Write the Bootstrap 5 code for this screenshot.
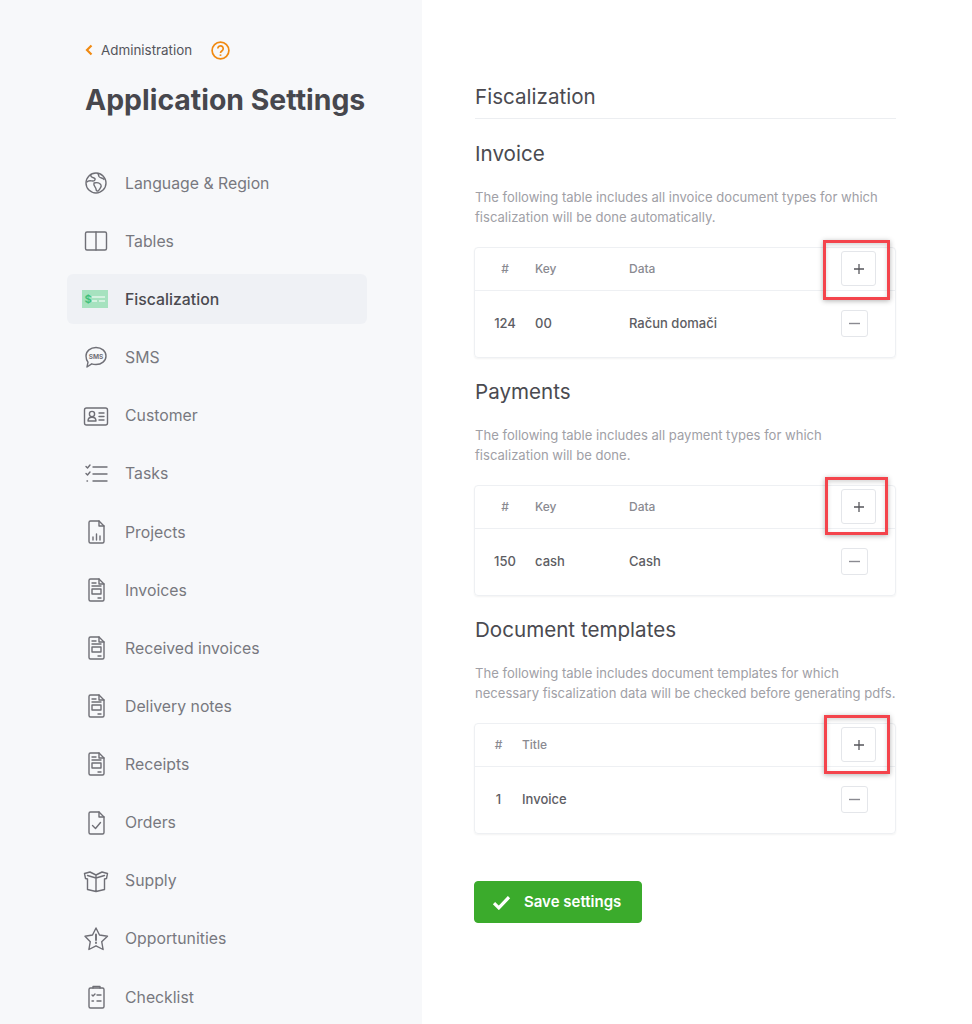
<!DOCTYPE html>
<html lang="en">
<head>
    <meta charset="UTF-8">
    <meta name="viewport" content="width=device-width, initial-scale=1.0">
    <title>Application Settings</title>
    <link href="https://cdn.jsdelivr.net/npm/bootstrap@5.3.0/dist/css/bootstrap.min.css" rel="stylesheet">
    <style>
        html, body { height: 1024px; overflow: hidden; }
        body { font-family: Inter, "Liberation Sans", sans-serif; color: #4a4a50; background: #fff; }
        .side-panel { width: 422px; height: 1024px; flex: none; background: #f7f8fa; padding: 40px 55px 0 67px; overflow: hidden; }
        .crumb-row { height: 20px; padding-left: 18px; font-size: 13.4px; color: #55555b; margin-bottom: 20px; }
        .crumb-back { width: 8px; height: 12px; margin-right: 8px; }
        .crumb-help { width: 19px; height: 19px; margin-left: 19px; }
        .page-title { font-size: 28.4px; font-weight: 700; line-height: 40px; color: #47474d; padding-left: 18px; margin: 0 0 38px; white-space: nowrap; }
        .side-item { height: 50px; margin-bottom: 8.15px; padding: 1px 0 0 58px; position: relative; border-radius: 6px; font-size: 15.8px; color: #78787f; text-decoration: none; }
        .side-item svg { position: absolute; left: 15px; top: 12px; width: 28px; height: 26px; fill: none; stroke: #6f6f76; stroke-width: 1.4; stroke-linecap: round; stroke-linejoin: round; }
        .side-item.is-active { background: #eff1f5; color: #4a4a50; font-weight: 500; }
        .main-panel { width: 421px; margin-left: 53px; padding-top: 81px; }
        .main-title { font-size: 20.6px; line-height: 30px; font-weight: 400; color: #4a4a50; margin: 0; padding: 1px 0 6px; border-bottom: 1px solid #eceef1; }
        .block-title { font-size: 20.6px; line-height: 30px; font-weight: 400; color: #4a4a50; margin: 0 0 18px; padding-top: 1px; }
        .block-title-first { margin-top: 19px; }
        .block-text { font-size: 13.07px; line-height: 20px; color: #a0a0a6; margin: 0 0 20px; }
        .set-box { border: 1px solid #eef0f3; border-radius: 4px; height: 111px; margin: 0 0 18px -1px; box-shadow: 0 1px 2px rgba(0,0,0,.05); }
        .set-table { table-layout: fixed; width: 100%; margin: 0; font-size: 13px; }
        .set-table th { height: 42px; font-size: 12px; font-weight: 500; color: #8a8a91; border-bottom: 1px solid #eef0f3; padding: 0; vertical-align: middle; position: relative; }
        .set-table td { height: 67px; color: #5d5d63; font-weight: 500; padding: 0; vertical-align: middle; border: 0; }
        .col-num { width: 60px; text-align: center; }
        .col-num-small { width: 47px; text-align: center; }
        .col-key { width: 94px; }
        .col-act { width: 54px; }
        .icon-btn { display: flex; align-items: center; justify-content: center; padding: 0; background: #fff; border: 1px solid #e4e6ea; border-radius: 3px; }
        .icon-btn svg { width: 10px; height: 10px; stroke: #55555b; stroke-width: 1.4; }
        .btn-add { width: 35px; height: 35px; }
        .btn-del { width: 27px; height: 27px; }
        .btn-del svg { width: 11px; height: 11px; stroke: #8a8a91; }
        .red-mark { position: absolute; border: 3px solid #f4444c; box-shadow: 0 1px 5px rgba(0,0,0,.3), inset 0 2px 4px rgba(0,0,0,.16); pointer-events: none; }
        .red-mark-a { left: -18px; top: -8px; width: 67px; height: 60px; }
        .red-mark-b { left: -16px; top: -9px; width: 63px; height: 58px; }
        .red-mark-c { left: -17px; top: -9px; width: 66px; height: 59px; }
        .save-btn { width: 168px; height: 42px; margin: 47px 0 0 -1px; background: #3bab2c; border-color: #3bab2c; color: #fff; font-size: 15px; font-weight: 600; padding: 1px 0 0 17px; border-radius: 4px; }
        .save-btn svg { width: 19px; height: 15px; margin-right: 13px; }
    </style>
</head>
<body>
    <svg width="0" height="0" class="position-absolute">
        <symbol id="ico-doc" viewBox="0 0 28 26">
            <path d="M7 3.500A1.500 1.500 0 0 1 8.500 2H17l5 5v15.500A1.500 1.500 0 0 1 20.500 24h-12A1.500 1.500 0 0 1 7 22.500z"/>
            <path d="M17 2v5h5M10 6h4M10 9h9"/>
            <rect x="10" y="12" width="9" height="5"/>
            <path d="M16 21h3"/>
        </symbol>
    </svg>

    <div class="d-flex">
        <aside class="side-panel">
            <div class="crumb-row d-flex align-items-center">
                <svg class="crumb-back" viewBox="0 0 8 12" fill="none" stroke="#f08a12" stroke-width="2.2"><path d="M6.500 1.500 2 6l4.500 4.500"/></svg>
                <span>Administration</span>
                <svg class="crumb-help" viewBox="0 0 19 19" fill="none" stroke="#f08a12" stroke-width="1.7">
                    <circle cx="9.500" cy="9.500" r="8.400"/>
                    <path d="M6.800 7.500a2.700 2.700 0 1 1 4.300 2.200c-1 .7-1.600 1.100-1.600 2.300"/>
                    <path d="M9.500 13.400v1.500"/>
                </svg>
            </div>
            <h1 class="page-title">Application Settings</h1>

            <nav>
                <a href="#" class="side-item d-flex align-items-center">
                    <svg viewBox="0 0 28 26"><circle cx="14" cy="13" r="10"/><path d="M9 4.500c-1 2 1 3 3 3.500s1 3-1 3-5-1-6 1M16 3.500l1 3c1 2 4 1 5 3M12 13c3-1 6 0 7 2s-1 3-2 5-3 1-3-1-3-3-2-6z"/></svg>
                    Language &amp; Region
                </a>
                <a href="#" class="side-item d-flex align-items-center">
                    <svg viewBox="0 0 28 26"><rect x="3.500" y="4" width="21" height="18" rx="1.500"/><path d="M14 4v18"/></svg>
                    Tables
                </a>
                <a href="#" class="side-item is-active d-flex align-items-center">
                    <svg viewBox="0 0 28 26" style="stroke:none"><rect x="0" y="4" width="26" height="18" fill="#a6e2bf"/><text x="2.500" y="17" font-size="11" font-weight="600" font-family="Inter" fill="#3fc07a">$</text><path d="M10 11h13M10 15h5M17 15h6" stroke="#e4f6ec" stroke-width="1.6" stroke-linecap="butt"/></svg>
                    Fiscalization
                </a>
                <a href="#" class="side-item d-flex align-items-center">
                    <svg viewBox="0 0 28 26"><path d="M14 3.500c5.500 0 10 3.500 10 8.500s-4.500 8.500-10 8.500c-1.500 0-3-.2-4.300-.7L5 23l1-4.800C4.700 16.500 4 14.400 4 12c0-5 4.500-8.500 10-8.500z"/><text x="14" y="14.500" font-size="6.500" font-weight="700" font-family="Inter" text-anchor="middle" fill="#6f6f76" stroke="none">SMS</text></svg>
                    SMS
                </a>
                <a href="#" class="side-item d-flex align-items-center">
                    <svg viewBox="0 0 28 26"><rect x="2.500" y="5" width="23" height="17" rx="2"/><circle cx="10" cy="11" r="2.600"/><path d="M6 18c0-5 8-5 8 0zM17 10h5M17 13.500h5M17 17h5"/></svg>
                    Customer
                </a>
                <a href="#" class="side-item d-flex align-items-center">
                    <svg viewBox="0 0 28 26"><path d="M11 6h14M11 13h14M11 20h14M4 5.500l1.500 1.500L8 4M4 12.500l1.500 1.500L8 11M5 20h.5"/></svg>
                    Tasks
                </a>
                <a href="#" class="side-item d-flex align-items-center">
                    <svg viewBox="0 0 28 26"><path d="M7 3.500A1.500 1.500 0 0 1 8.500 2H17l5 5v15.500A1.500 1.500 0 0 1 20.500 24h-12A1.500 1.500 0 0 1 7 22.500z"/><path d="M17 2v5h5M11 21v-3M14.500 21v-6M18 21v-4"/></svg>
                    Projects
                </a>
                <a href="#" class="side-item d-flex align-items-center">
                    <svg viewBox="0 0 28 26"><use href="#ico-doc"/></svg>
                    Invoices
                </a>
                <a href="#" class="side-item d-flex align-items-center">
                    <svg viewBox="0 0 28 26"><use href="#ico-doc"/></svg>
                    Received invoices
                </a>
                <a href="#" class="side-item d-flex align-items-center">
                    <svg viewBox="0 0 28 26"><use href="#ico-doc"/></svg>
                    Delivery notes
                </a>
                <a href="#" class="side-item d-flex align-items-center">
                    <svg viewBox="0 0 28 26"><use href="#ico-doc"/></svg>
                    Receipts
                </a>
                <a href="#" class="side-item d-flex align-items-center">
                    <svg viewBox="0 0 28 26"><path d="M7 3.500A1.500 1.500 0 0 1 8.500 2H17l5 5v15.500A1.500 1.500 0 0 1 20.500 24h-12A1.500 1.500 0 0 1 7 22.500z"/><path d="M17 2v5h5M10.500 15.500l3 3 5-6"/></svg>
                    Orders
                </a>
                <a href="#" class="side-item d-flex align-items-center">
                    <svg viewBox="0 0 28 26"><path d="M5.500 11v10.500l8.500 2 8.500-2V11M14 7v16.500M2.500 5.500 8 4l6 3 6-3 5.500 1.500-1 5-2 .5M2.500 5.500l1 5 2 .5M5.500 7.500 14 10l8.500-2.500"/></svg>
                    Supply
                </a>
                <a href="#" class="side-item d-flex align-items-center">
                    <svg viewBox="0 0 28 26"><path d="m14 2 3.500 7 8 1.200-5.800 5.500 1.400 7.800-7.100-3.700-7.100 3.700 1.400-7.800L3 10.200 10.500 9z"/><path d="M14 8.500v5.500M14 16.500v.6" stroke-width="1.900"/></svg>
                    Opportunities
                </a>
                <a href="#" class="side-item d-flex align-items-center">
                    <svg viewBox="0 0 28 26"><rect x="7" y="4" width="15" height="20" rx="1.500"/><path d="M11 4V2.500h7V4M10 11l1 1 2-2M15 11h4M10 17h1.500M15 17h4"/></svg>
                    Checklist
                </a>
            </nav>
        </aside>

        <main class="main-panel">
            <h2 class="main-title">Fiscalization</h2>

            <h3 class="block-title block-title-first">Invoice</h3>
            <p class="block-text">The following table includes all invoice document types for which fiscalization will be done automatically.</p>
            <div class="set-box">
                <table class="table set-table">
                    <thead>
                        <tr>
                            <th class="col-num">#</th>
                            <th class="col-key">Key</th>
                            <th>Data</th>
                            <th class="col-act">
                                <button class="icon-btn btn-add" type="button"><svg viewBox="0 0 11 11"><path d="M5.500 0v11M0 5.500h11"/></svg></button>
                                <span class="red-mark red-mark-a"></span>
                            </th>
                        </tr>
                    </thead>
                    <tbody>
                        <tr>
                            <td class="col-num">124</td>
                            <td>00</td>
                            <td>Račun domači</td>
                            <td><button class="icon-btn btn-del" type="button"><svg viewBox="0 0 11 11"><path d="M0 5.500h11"/></svg></button></td>
                        </tr>
                    </tbody>
                </table>
            </div>

            <h3 class="block-title">Payments</h3>
            <p class="block-text">The following table includes all payment types for which<br>fiscalization will be done.</p>
            <div class="set-box">
                <table class="table set-table">
                    <thead>
                        <tr>
                            <th class="col-num">#</th>
                            <th class="col-key">Key</th>
                            <th>Data</th>
                            <th class="col-act">
                                <button class="icon-btn btn-add" type="button"><svg viewBox="0 0 11 11"><path d="M5.500 0v11M0 5.500h11"/></svg></button>
                                <span class="red-mark red-mark-b"></span>
                            </th>
                        </tr>
                    </thead>
                    <tbody>
                        <tr>
                            <td class="col-num">150</td>
                            <td>cash</td>
                            <td>Cash</td>
                            <td><button class="icon-btn btn-del" type="button"><svg viewBox="0 0 11 11"><path d="M0 5.500h11"/></svg></button></td>
                        </tr>
                    </tbody>
                </table>
            </div>

            <h3 class="block-title">Document templates</h3>
            <p class="block-text">The following table includes document templates for which necessary fiscalization data will be checked before generating pdfs.</p>
            <div class="set-box">
                <table class="table set-table">
                    <thead>
                        <tr>
                            <th class="col-num-small">#</th>
                            <th>Title</th>
                            <th class="col-act">
                                <button class="icon-btn btn-add" type="button"><svg viewBox="0 0 11 11"><path d="M5.500 0v11M0 5.500h11"/></svg></button>
                                <span class="red-mark red-mark-c"></span>
                            </th>
                        </tr>
                    </thead>
                    <tbody>
                        <tr>
                            <td class="col-num-small">1</td>
                            <td>Invoice</td>
                            <td><button class="icon-btn btn-del" type="button"><svg viewBox="0 0 11 11"><path d="M0 5.500h11"/></svg></button></td>
                        </tr>
                    </tbody>
                </table>
            </div>

            <button class="btn save-btn d-flex align-items-center" type="button">
                <svg viewBox="0 0 17 14" fill="none" stroke="#fff" stroke-width="3"><path d="M1.500 7.500 6 12 15.500 2"/></svg>
                Save settings
            </button>
        </main>
    </div>

    <script src="https://cdn.jsdelivr.net/npm/bootstrap@5.3.0/dist/js/bootstrap.bundle.min.js"></script>
</body>
</html>
